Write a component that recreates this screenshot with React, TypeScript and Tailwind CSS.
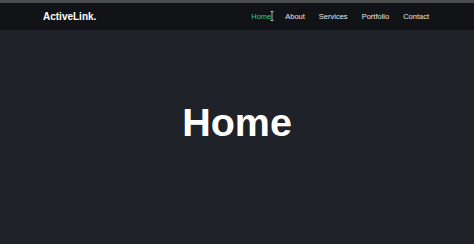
import React from "react";

export default function App() {
  const links = ["Home", "About", "Services", "Portfolio", "Contact"];
  return (
    <div className="w-[474px] h-[244px] bg-[#1f2229] flex flex-col" style={{ fontFamily: '"Liberation Sans", Arial, sans-serif' }}>
      <div className="h-[3px] bg-[#4a4b4d]" />
      <nav className="h-[27px] bg-[#111316] flex items-center pl-[43px] pr-[45px]">
        <div className="text-[10px] font-bold text-white leading-none">ActiveLink.</div>
        <ul className="ml-auto flex items-center gap-[14px] text-[7.5px] leading-none">
          {links.map((l, i) => (
            <li key={l} className={i === 0 ? "text-[#33c4a8] relative" : "text-[#e8e8e8]"}>
              {l}
              {i === 0 && (
                <svg className="absolute -right-[3px] -top-[2px]" width="4" height="10" viewBox="0 0 4 10">
                  <path d="M0.5 0.5h3M2 0.5v9M0.5 9.5h3" stroke="#d8d8d8" strokeWidth="0.8" fill="none" />
                </svg>
              )}
            </li>
          ))}
        </ul>
      </nav>
      <main className="flex-1 flex justify-center pt-[73px]">
        <h1 className="text-[39.5px] font-bold text-white leading-none">Home</h1>
      </main>
    </div>
  );
}
